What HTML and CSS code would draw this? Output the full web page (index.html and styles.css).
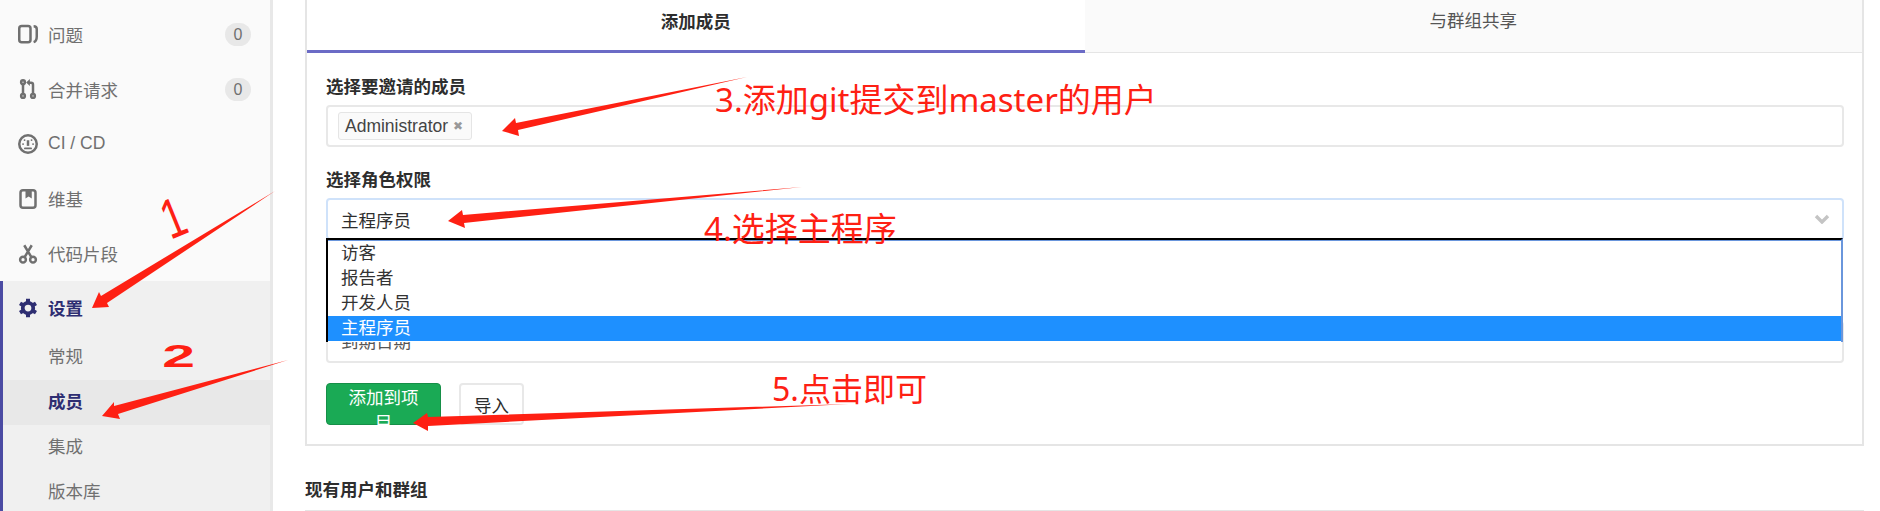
FILE: index.html
```html
<!DOCTYPE html>
<html lang="zh-CN">
<head>
    <meta charset="UTF-8">
    <title>成员</title>
    <link rel="stylesheet" href="styles.css">
</head>
<body>
    <div class="page">
        <aside class="sidebar">
            <ul class="nav">
                <li class="nav-item">
                    <svg class="icon" viewBox="0 0 16 16"><rect x="1" y="1.5" width="9" height="13" rx="2"/><path d="M12.5 1.7c1.7 0 2.5.8 2.5 2.3v6c0 2.500-1 4-2.500 4.500"/></svg>
                    <span>问题</span><span class="badge">0</span>
                </li>
                <li class="nav-item">
                    <svg class="icon" viewBox="0 0 16 16"><circle cx="4" cy="2.500" r="1.500"/><circle cx="4" cy="13.500" r="1.500"/><circle cx="12" cy="13.500" r="1.500"/><path d="M4 4v8M12 12V4.500c0-1-.5-1.500-1.500-1.500H8"/><path class="fill" d="M9.500 0v5.500L6.500 2.800z"/></svg>
                    <span>合并请求</span><span class="badge">0</span>
                </li>
                <li class="nav-item">
                    <svg class="icon" viewBox="0 0 16 16"><circle cx="8" cy="8" r="7"/><path d="M8 5v4.500"/><path class="dots" d="M4 8h.1M5.200 4.800h.1M10.800 4.800h.1M12 8h.1M5.500 11.500h5"/></svg>
                    <span>CI / CD</span>
                </li>
                <li class="nav-item">
                    <svg class="icon" viewBox="0 0 16 16"><rect x="2" y="1" width="12" height="14" rx="2"/><path class="fill" d="M6 1h5v6.500L8.500 6 6 7.500z"/></svg>
                    <span>维基</span>
                </li>
                <li class="nav-item">
                    <svg class="icon" viewBox="0 0 16 16"><circle cx="4" cy="12.500" r="2.300"/><circle cx="12" cy="12.500" r="2.300"/><path d="M5.300 10.500 11 1M10.700 10.500 5 1"/></svg>
                    <span>代码片段</span>
                </li>
            </ul>
            <div class="settings">
                <div class="settings-head">
                    <svg class="icon gear" viewBox="0 0 16 16"><circle cx="8" cy="8" r="4.200"/><path d="M8 .6v3M8 12.400v3M1.600 4.300l2.600 1.500M11.800 10.200l2.600 1.500M1.600 11.700l2.600-1.500M11.800 5.800l2.600-1.500"/></svg>
                    <span>设置</span>
                </div>
                <div class="sub-item">常规</div>
                <div class="sub-item active">成员</div>
                <div class="sub-item">集成</div>
                <div class="sub-item">版本库</div>
            </div>
        </aside>

        <main class="content">
            <div class="panel">
                <div class="tabs">
                    <div class="tab active">添加成员</div>
                    <div class="tab">与群组共享</div>
                </div>
                <form class="panel-body">
                    <label class="field-label">选择要邀请的成员</label>
                    <div class="input token-input">
                        <span class="token">Administrator <span class="token-x">✖</span></span>
                    </div>
                    <label class="field-label second">选择角色权限</label>
                    <div class="select-wrap">
                        <div class="input select">
                            <span>主程序员</span>
                            <svg class="chevron" viewBox="0 0 16 10"><path d="M2 2l6 6 6-6"/></svg>
                        </div>
                        <ul class="dropdown">
                            <li>访客</li>
                            <li>报告者</li>
                            <li>开发人员</li>
                            <li class="selected">主程序员</li>
                        </ul>
                    </div>
                    <div class="input date-input">到期日期</div>
                    <div class="actions">
                        <button type="button" class="btn btn-green">添加到项目</button>
                        <button type="button" class="btn">导入</button>
                    </div>
                </form>
            </div>
            <h4 class="section-title">现有用户和群组</h4>
        </main>
    </div>

    <!-- red notes drawn over the screenshot -->
    <svg class="arrows" viewBox="0 0 1880 511">
        <polygon points="275,191 101,296 99,292 92,308 109,307 107,303"/>
        <polygon points="288,360 114,406 114,402 102,416 120,419 118,414"/>
        <polygon points="747,77 516,123 515,118 502,131 519,136 518,130"/>
        <polygon points="802,187 463,215 462,210 448,221 465,228 464,223"/>
        <polygon points="849,404 428,417 427,413 413,423 428,431 428,426"/>
    </svg>
    <span class="note note-1">1</span>
    <span class="note note-2">2</span>
    <span class="note note-git">3.添加git提交到master的用户</span>
    <span class="note note-role">4.选择主程序</span>
    <span class="note note-click">5.点击即可</span>
</body>
</html>
```

FILE: styles.css
```css
* {
    box-sizing: border-box;
}
html, body {
    margin: 0;
    height: 511px;
    overflow: hidden;
    background-color: #fff;
}
body {
    position: relative;
    font-family: "Liberation Sans", "Noto Sans CJK SC", sans-serif;
    font-size: 17.5px;
    color: #2e2e2e;
}
ul {
    list-style: none;
    margin: 0;
    padding: 0;
}
.page {
    display: flex;
    height: 511px;
}

/* sidebar */
.sidebar {
    width: 273px;
    flex-shrink: 0;
    height: 511px;
    padding-top: 7px;
    overflow: hidden;
    background-color: #fafafa;
    border-right: 3px solid #e8e8e8;
    color: #707070;
}
.nav-item {
    display: flex;
    align-items: center;
    height: 54.8px;
    padding: 0 19px 0 18px;
}
.icon {
    width: 20px;
    height: 20px;
    margin-right: 10px;
    flex-shrink: 0;
    fill: none;
    stroke: #707070;
    stroke-width: 2;
}
.icon .fill {
    fill: #707070;
    stroke: none;
}
.icon .dots {
    stroke-linecap: round;
    stroke-width: 1.4;
}
.badge {
    margin-left: auto;
    width: 26px;
    height: 23px;
    line-height: 23px;
    text-align: center;
    border-radius: 12px;
    background-color: #e8e8e8;
    font-size: 16px;
}
.settings {
    background-color: #f0f0f0;
    border-left: 3px solid #4b4ba3;
    height: 230px;
}
.settings-head {
    display: flex;
    align-items: center;
    height: 54px;
    padding-left: 15px;
    font-weight: bold;
    color: #2e2e72;
}
.gear {
    stroke: #2e2e72;
}
.gear path {
    stroke-width: 3.2;
}
.gear circle {
    stroke-width: 3;
}
.sub-item {
    height: 45px;
    line-height: 45px;
    padding-left: 45px;
}
.sub-item.active {
    background-color: #e8e8e8;
    font-weight: bold;
    color: #2e2e72;
}

/* main column */
.content {
    flex: 1;
    min-width: 0;
    padding: 0 16px 0 32px;
}
.panel {
    border: solid #e5e5e5;
    border-width: 0 2px 2px 2px;
    height: 446px;
}
.tabs {
    display: flex;
    height: 53px;
}
.tab {
    flex: 1;
    display: flex;
    align-items: center;
    justify-content: center;
    padding-bottom: 13px;
    background-color: #fafafa;
    border-bottom: 1px solid #e5e5e5;
    color: #555;
}
.tab.active {
    background-color: #fff;
    border-bottom: 3px solid #6b6bc6;
    padding-bottom: 10px;
    font-weight: bold;
    color: #2e2e2e;
}
.panel-body {
    padding: 23px 18px 0 19px;
}
.field-label {
    display: block;
    height: 22px;
    line-height: 22px;
    margin-bottom: 7px;
    font-weight: bold;
}
.field-label.second {
    margin-top: 22px;
}
.input {
    height: 42px;
    border: 2px solid #e8e8e8;
    border-radius: 4px;
    background-color: #fff;
}
.token-input {
    display: flex;
    align-items: center;
    padding-left: 10px;
}
.token {
    display: flex;
    align-items: center;
    height: 28px;
    padding: 0 8px 0 6px;
    gap: 5px;
    border: 1px solid #e5e5e5;
    border-radius: 3px;
    background-color: #fafafa;
    color: #444;
}
.token-x {
    font-family: "DejaVu Sans", sans-serif;
    font-size: 12px;
    color: #999;
}
.select-wrap {
    position: relative;
}
.select {
    display: flex;
    align-items: center;
    justify-content: space-between;
    padding: 0 12px 0 13px;
    border-color: #cfe2fa;
}
.chevron {
    width: 16px;
    height: 10px;
    fill: none;
    stroke: #c4c4c4;
    stroke-width: 3.4;
}
.dropdown {
    position: absolute;
    z-index: 2;
    top: 40px;
    left: 0;
    right: 1px;
    height: 104px;
    background-color: #fff;
    border-top: 2px solid #000;
    border-left: 2px solid #000;
    border-right: 2px solid #6a96dc;
    box-shadow: inset 0 1px 0 #6a96dc;
    padding-top: 1px;
    color: #333;
}
.dropdown li {
    height: 25px;
    line-height: 24px;
    padding-left: 13px;
}
.dropdown .selected {
    background-color: #1e90ff;
    color: #fff;
}
.date-input {
    margin-top: 81px;
    padding-left: 13px;
    line-height: 38px;
    color: #555;
}
.actions {
    display: flex;
    gap: 18px;
    margin-top: 20px;
}
.btn {
    height: 42px;
    padding: 0 13px;
    font: inherit;
    color: #2e2e2e;
    background-color: #fff;
    border: 2px solid #e8e8e8;
    border-radius: 4px;
}
.btn-green {
    width: 115px;
    background-color: #1aaa55;
    border: 1px solid #168f48;
    color: #fff;
}
.section-title {
    margin: 33px 0 0;
    height: 32px;
    line-height: 22px;
    font-size: 17.5px;
    font-weight: bold;
    border-bottom: 1px solid #e5e5e5;
}

/* annotations */
.arrows {
    position: absolute;
    z-index: 3;
    top: 0;
    left: 0;
    width: 1880px;
    height: 511px;
    fill: #fe2013;
}
.note {
    position: absolute;
    z-index: 4;
    color: #fe2013;
    font-family: "Noto Sans", "Noto Sans CJK SC", sans-serif;
    white-space: nowrap;
    line-height: 1;
}
.note-1 {
    left: 158px;
    top: 190px;
    font-family: "Liberation Sans", sans-serif;
    font-size: 56px;
    transform: rotate(-22deg) scaleX(.7);
}
.note-2 {
    left: 170px;
    top: 341px;
    font-family: "Liberation Sans", sans-serif;
    font-weight: bold;
    font-size: 31px;
    transform: scaleX(1.9);
}
.note-git {
    left: 715px;
    top: 83px;
    font-size: 33px;
}
.note-role {
    left: 704px;
    top: 212px;
    font-size: 33px;
}
.note-click {
    left: 772px;
    top: 373px;
    font-size: 32px;
}
```
